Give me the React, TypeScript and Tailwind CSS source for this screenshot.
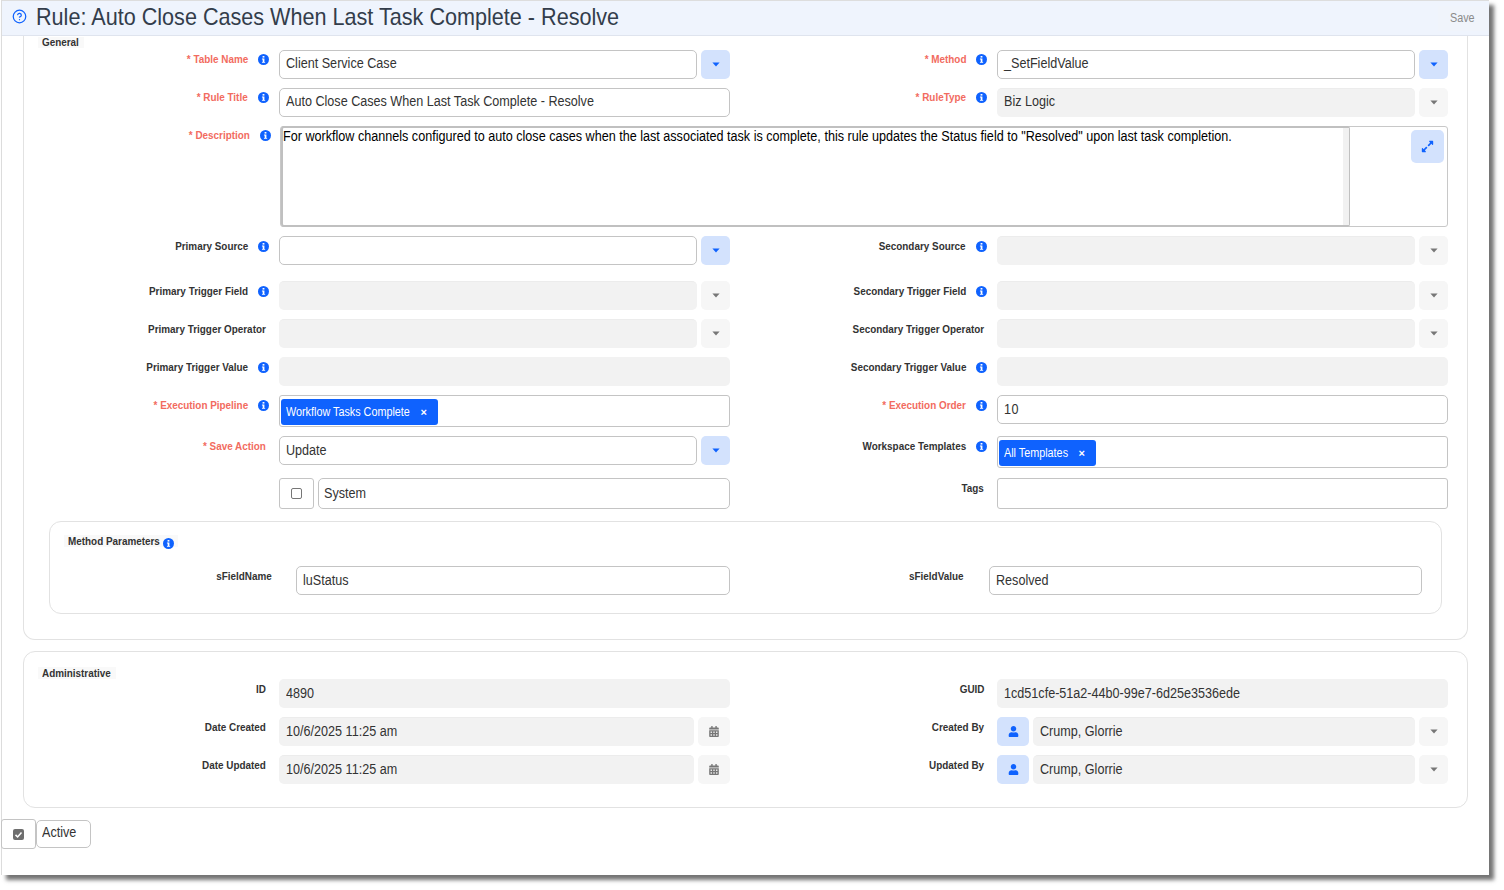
import type { ReactNode } from 'react'
import { CircleHelp } from 'lucide-react'
import { FaCalendarAlt, FaExpandAlt, FaUser } from 'react-icons/fa'

function Info({ className = '' }: { className?: string }) {
  return (
    <svg viewBox="0 0 12 12" className={`w-[11px] h-[11px] shrink-0 ${className}`}>
      <circle cx="6" cy="6" r="6" fill="#0f62fe" />
      <rect x="5" y="2.2" width="2" height="1.7" fill="#fff" />
      <path d="M4.3 5h2.7v3.6h.8v1H4.3v-1h.8V6h-.8z" fill="#fff" />
    </svg>
  )
}

function Caret({ color }: { color: string }) {
  return (
    <svg viewBox="0 0 10 6" className="w-[8px] h-[5px]">
      <path d="M0.5 0.5h9L5 5.5z" fill={color} />
    </svg>
  )
}

// the text in the picture runs about 10% narrower than the font
function Sq({ children, right }: { children: ReactNode; right?: boolean }) {
  return <span className={`inline-block scale-x-[0.9] whitespace-nowrap ${right ? 'origin-right' : 'origin-left'}`}>{children}</span>
}

function Label({
  text,
  required,
  info,
  width,
  descr,
  top = 'pt-[4px]',
}: {
  text: string
  required?: boolean
  info?: boolean
  width: string
  descr?: boolean
  top?: string
}) {
  return (
    <div className={`${width} shrink-0 flex justify-end items-start ${top} ${info ? (descr ? 'pr-[8px]' : 'pr-[10px]') : 'pr-[13px]'}`}>
      <span className={`text-[11px] leading-[12px] font-bold ${required ? 'text-[#f26b60]' : 'text-[#333333]'}`}>
        <Sq right>
          {required ? '* ' : ''}
          {text}
        </Sq>
      </span>
      {info && <Info className="ml-[10px] mt-[1px]" />}
    </div>
  )
}

const inputText = 'text-[14px] leading-[18px] text-[#333333] whitespace-nowrap'

function TextBox({ value, className = 'pb-[2px]' }: { value?: string; className?: string }) {
  return (
    <div className={`flex-1 h-[29px] border border-[#c4c4c4] rounded-[5px] bg-white pl-[6px] flex items-center ${inputText} ${className}`}>
      <Sq>{value}</Sq>
    </div>
  )
}

function Disabled({ value, className = '' }: { value?: string; className?: string }) {
  return (
    <div className={`flex-1 h-[29px] rounded-[5px] bg-[#f2f2f2] pl-[7px] flex items-center ${inputText} ${className}`}>
      <Sq>{value}</Sq>
    </div>
  )
}

function Select({ value, pb = 'pb-[2px]' }: { value?: string; pb?: string }) {
  return (
    <div className="flex gap-[4px] w-[451px]">
      <TextBox value={value} className={pb} />
      <div className="w-[29px] h-[29px] rounded-[5px] bg-[#d3e2fd] flex items-center justify-center">
        <Caret color="#0f62fe" />
      </div>
    </div>
  )
}

function DisabledSelect({ value, pb = 'pb-[2px]' }: { value?: string; pb?: string }) {
  return (
    <div className="flex gap-[4px] w-[451px]">
      <Disabled value={value} className={`border-t border-[#ececec] ${pb}`} />
      <div className="w-[29px] h-[29px] rounded-[5px] bg-[#f6f6f6] flex items-center justify-center">
        <Caret color="#777777" />
      </div>
    </div>
  )
}

function DateBox({ value }: { value: string }) {
  return (
    <div className="flex gap-[4px] w-[451px]">
      <Disabled value={value} className="border-t border-[#ececec] pb-[2px]" />
      <div className="w-[32px] h-[29px] rounded-[5px] bg-[#f6f6f6] flex items-center justify-center">
        <FaCalendarAlt className="w-[10px] h-[11px] text-[#777777]" />
      </div>
    </div>
  )
}

function UserSelect({ value }: { value: string }) {
  return (
    <div className="flex gap-[4px] w-[451px]">
      <div className="w-[32px] h-[29px] rounded-[5px] bg-[#d3e2fd] flex items-center justify-center">
        <FaUser className="w-[11px] h-[11px] text-[#0f62fe]" />
      </div>
      <Disabled value={value} className="border-t border-[#ececec] pb-[2px]" />
      <div className="w-[29px] h-[29px] rounded-[5px] bg-[#f6f6f6] flex items-center justify-center">
        <Caret color="#777777" />
      </div>
    </div>
  )
}

function Chip({ text, width }: { text: string; width: string }) {
  return (
    <div className={`${width} h-[26px] rounded-[3px] bg-[#0f62fe] text-white flex items-center pl-[5px] pr-[11px] text-[12px]`}>
      <div className="flex-1 min-w-0"><Sq>{text}</Sq></div>
      <span className="shrink-0 text-[11px] leading-none font-bold">×</span>
    </div>
  )
}

function Row({ className = 'mt-[9px]', children }: { className?: string; children: ReactNode }) {
  return <div className={`flex items-start ${className}`}>{children}</div>
}

function Legend({ text, className = '' }: { text: string; className?: string }) {
  return (
    <div className={`bg-[#f9f9f9] pl-[4px] text-[11px] font-bold text-[#333333] ${className}`}>
      <Sq>{text}</Sq>
    </div>
  )
}

const L = 'w-[255px]'
const R = 'w-[267px]'
const T3 = 'pt-[3px]'
const P3 = 'pb-[4px]'

export default function App() {
  return (
    <div className="w-[1504px] h-[890px] bg-white pl-[1px] overflow-hidden" style={{ fontFamily: '"Liberation Sans", Arial, sans-serif' }}>
      <div className="w-[1488px] h-[875px] bg-white border-l border-[#dcdcdc] shadow-[5px_5px_4px_rgba(0,0,0,0.55)] flex flex-col">
        {/* header */}
        <div className="h-[36px] shrink-0 border-t border-b border-t-[#dddddd] border-b-[#dfe4ee] bg-[#eff4fd] flex items-center pl-[10px] pr-[1px]">
          <CircleHelp className="w-[15px] h-[15px] -mt-[4px] text-[#0f62fe]" strokeWidth={2} />
          <h1 className="ml-[9px] -mt-[3px] text-[24px] leading-[30px] text-[#333d4b]">
            <Sq>Rule: Auto Close Cases When Last Task Complete - Resolve</Sq>
          </h1>
          <button className="ml-auto w-[50px] h-[25px] bg-[#f0f4fb] text-[12px] text-[#8a8a8a] pl-[12px] text-left">
            <Sq>Save</Sq>
          </button>
        </div>

        {/* general */}
        <div className="mx-[21px] h-[604px] shrink-0 border border-t-0 border-[#e2e2e2] rounded-b-[12px]">
          <Legend text="General" className="mt-[1px] ml-[14px] w-[46px] h-[11px] leading-[11px]" />
          <Row className="mt-[2px]">
            <Label text="Table Name" required info width={L} top={T3} />
            <Select value="Client Service Case" pb={P3} />
            <Label text="Method" required info width={R} top={T3} />
            <Select value="_SetFieldValue" pb={P3} />
          </Row>
          <Row>
            <Label text="Rule Title" required info width={L} top={T3} />
            <div className="w-[451px] flex"><TextBox value="Auto Close Cases When Last Task Complete - Resolve" className={P3} /></div>
            <Label text="RuleType" required info width={R} top={T3} />
            <DisabledSelect value="Biz Logic" pb={P3} />
          </Row>
          <Row>
            <Label text="Description" required info descr width={L} top={T3} />
            <div className="ml-[1px] w-[1168px] h-[101px] border border-[#c8c8c8] rounded-[3px] flex">
              <div className="w-[1069px] h-[101px] -mt-[1px] border-t-2 border-b-2 border-l-2 border-r border-[#c0c0c0] rounded-[3px] flex">
                <div className="flex-1 min-w-0 text-[14px] leading-[16px] text-black">
                  <Sq>For workflow channels configured to auto close cases when the last associated task is complete, this rule updates the Status field to &quot;Resolved&quot; upon last task completion.</Sq>
                </div>
                <div className="w-[6px] bg-[#f1f1f1]" />
              </div>
              <div className="flex-1 flex justify-end pt-[3px] pr-[3px]">
                <div className="w-[33px] h-[33px] rounded-[5px] bg-[#d3e2fd] flex items-center justify-center">
                  <FaExpandAlt className="w-[13px] h-[13px] text-[#0f62fe]" />
                </div>
              </div>
            </div>
          </Row>
          <Row>
            <Label text="Primary Source" info width={L} />
            <Select />
            <Label text="Secondary Source" info width={R} />
            <DisabledSelect />
          </Row>
          <Row className="mt-[16px]">
            <Label text="Primary Trigger Field" info width={L} />
            <DisabledSelect />
            <Label text="Secondary Trigger Field" info width={R} />
            <DisabledSelect />
          </Row>
          <Row>
            <Label text="Primary Trigger Operator" width={L} />
            <DisabledSelect />
            <Label text="Secondary Trigger Operator" width={R} />
            <DisabledSelect />
          </Row>
          <Row>
            <Label text="Primary Trigger Value" info width={L} />
            <div className="w-[451px] flex"><Disabled /></div>
            <Label text="Secondary Trigger Value" info width={R} />
            <div className="w-[451px] flex"><Disabled /></div>
          </Row>
          <Row>
            <Label text="Execution Pipeline" required info width={L} />
            <div className="w-[451px] h-[32px] border border-[#c4c4c4] rounded-[3px] flex items-start pl-[1px] pt-[3px]">
              <Chip text="Workflow Tasks Complete" width="w-[157px]" />
            </div>
            <Label text="Execution Order" required info width={R} />
            <div className="w-[451px] flex">
              <TextBox value="10" className="pb-[2px] tracking-[0.6px]" />
            </div>
          </Row>
          <Row>
            <Label text="Save Action" required width={L} />
            <Select value="Update" />
            <Label text="Workspace Templates" info width={R} />
            <div className="w-[451px] h-[32px] border border-[#c4c4c4] rounded-[3px] flex items-start pl-[1px] pt-[3px]">
              <Chip text="All Templates" width="w-[97px]" />
            </div>
          </Row>
          <Row className="mt-[10px]">
            <div className={`${L} shrink-0`} />
            <div className="w-[451px] flex gap-[4px]">
              <div className="w-[35px] h-[31px] border border-[#c4c4c4] rounded-[3px] flex items-center justify-center">
                <div className="w-[11px] h-[11px] border border-[#767676] rounded-[2px] bg-white" />
              </div>
              <div className={`flex-1 h-[31px] border border-[#c4c4c4] rounded-[5px] pl-[5px] pb-[1px] flex items-center ${inputText}`}><Sq>System</Sq></div>
            </div>
            <Label text="Tags" width={R} />
            <div className="w-[451px] h-[31px] border border-[#c4c4c4] rounded-[3px]" />
          </Row>

          {/* method parameters */}
          <div className="mt-[12px] ml-[25px] w-[1393px] h-[93px] border border-[#e2e2e2] rounded-[12px] pt-[13px]">
            <div className="ml-[14px] flex items-center w-[114px] bg-[#f9f9f9] pl-[4px] h-[12px]">
              <span className="w-[92px] shrink-0 text-[11px] leading-[12px] font-bold text-[#333333]"><Sq>Method Parameters</Sq></span>
              <Info className="ml-[3px] mt-[4px]" />
            </div>
            <div className="flex items-start mt-[19px]">
              <div className="w-[222px] shrink-0 text-right pt-[4px] text-[11px] leading-[12px] font-bold text-[#333333]"><Sq right>sFieldName</Sq></div>
              <div className="ml-[24px] w-[434px] flex"><TextBox value="luStatus" /></div>
              <div className="w-[234px] shrink-0 text-right pt-[4px] text-[11px] leading-[12px] font-bold text-[#333333]"><Sq right>sFieldValue</Sq></div>
              <div className="ml-[25px] w-[433px] flex"><TextBox value="Resolved" /></div>
            </div>
          </div>
        </div>

        {/* administrative */}
        <div className="mx-[21px] mt-[11px] h-[157px] shrink-0 border border-[#e2e2e2] rounded-[12px] pt-[15px]">
          <Legend text="Administrative" className="ml-[14px] w-[78px] h-[12px] leading-[12px]" />
          <Row className="mt-[0px]">
            <Label text="ID" width={L} />
            <div className="w-[451px] flex"><Disabled value="4890" className="pb-[2px]" /></div>
            <Label text="GUID" width={R} />
            <div className="w-[451px] flex"><Disabled value="1cd51cfe-51a2-44b0-99e7-6d25e3536ede" className="pb-[2px]" /></div>
          </Row>
          <Row>
            <Label text="Date Created" width={L} />
            <DateBox value="10/6/2025 11:25 am" />
            <Label text="Created By" width={R} />
            <UserSelect value="Crump, Glorrie" />
          </Row>
          <Row>
            <Label text="Date Updated" width={L} />
            <DateBox value="10/6/2025 11:25 am" />
            <Label text="Updated By" width={R} />
            <UserSelect value="Crump, Glorrie" />
          </Row>
        </div>

        {/* active */}
        <div className="mt-[11px] -ml-[1px] flex items-start">
          <div className="w-[35px] h-[30px] border border-[#c4c4c4] rounded-[3px] flex items-center justify-center">
            <div className="w-[11px] h-[11px] rounded-[2px] bg-[#6e6e6e] flex items-center justify-center">
              <svg viewBox="0 0 12 12" className="w-[9px] h-[9px]"><path d="M2 6.5l2.8 2.8L10 3.2" fill="none" stroke="#fff" strokeWidth="2" /></svg>
            </div>
          </div>
          <div className={`mt-[1px] w-[55px] h-[28px] border border-[#c4c4c4] rounded-[5px] pl-[5px] pt-[2px] ${inputText}`}><Sq>Active</Sq></div>
        </div>
      </div>
    </div>
  )
}
